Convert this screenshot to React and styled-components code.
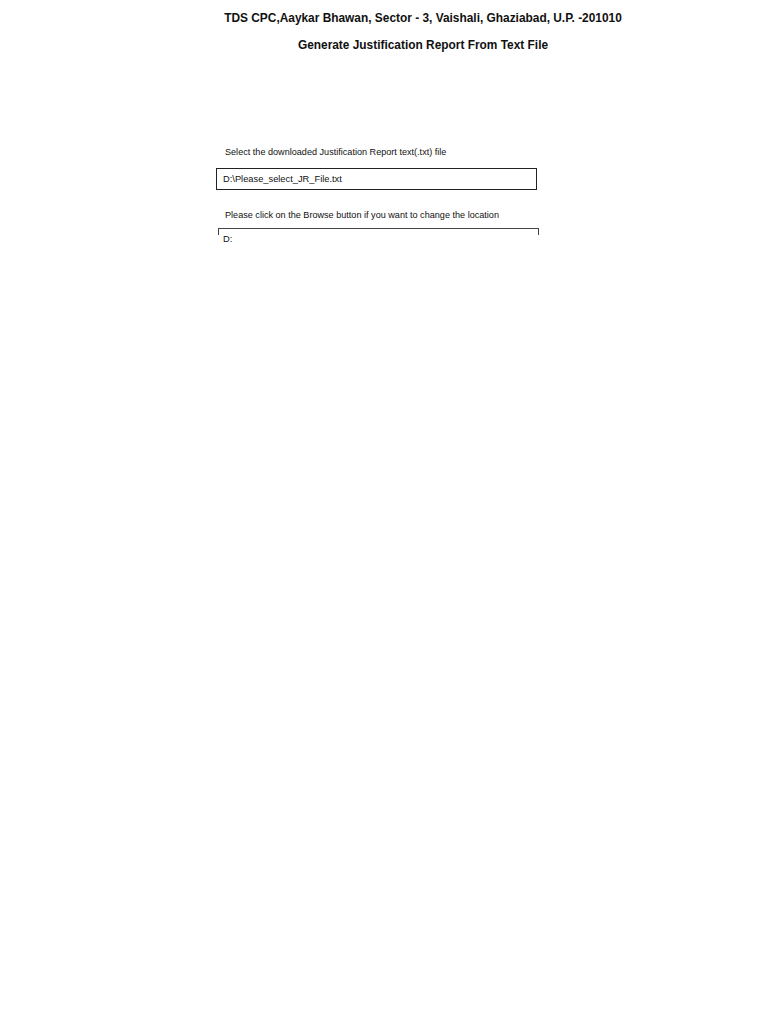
import React from 'react'
import styled, { createGlobalStyle } from 'styled-components'

const Global = createGlobalStyle`
  html, body {
    margin: 0;
    padding: 0;
    background: #ffffff;
  }
  body {
    font-family: "Liberation Sans", Arial, sans-serif;
    color: #111;
  }
`

const Page = styled.div`
  width: 768px;
  height: 1024px;
  background: #fff;
`

const Sheet = styled.div`
  margin-left: 216px;
  width: 414px;
  display: flex;
  flex-direction: column;
  padding-top: 11px;
`

const Title = styled.div`
  text-align: center;
  font-weight: bold;
  font-size: 11.9px;
  line-height: 14px;
  margin-bottom: ${p => p.$gap || 0}px;
`

const Label = styled.div`
  font-size: 9.1px;
  line-height: 10px;
  padding-left: 9px;
  margin-bottom: ${p => p.$gap || 0}px;
`

const Field = styled.div`
  width: 313px;
  height: 20px;
  border: 1px solid #222;
  box-sizing: content-box;
  display: flex;
  align-items: center;
  padding-left: 6px;
  font-size: 9.3px;
  margin-bottom: ${p => p.$gap || 0}px;
`

const CutField = styled.div`
  position: relative;
  margin-left: 2px;
  width: 316px;
  border-top: 1px solid #444;
  padding: 5px 0 0 5px;
  font-size: 9.3px;
  line-height: 11px;

  &::before, &::after {
    content: '';
    position: absolute;
    top: 0;
    width: 1px;
    height: 6px;
    background: #444;
  }
  &::before { left: 0; }
  &::after { right: 0; }
`

export default function App() {
  return (
    <Page>
      <Global />
      <Sheet>
        <Title $gap={13}>TDS CPC,Aaykar Bhawan, Sector - 3, Vaishali, Ghaziabad, U.P. -201010</Title>
        <Title $gap={95}>Generate Justification Report From Text File</Title>
        <Label $gap={11}>Select the downloaded Justification Report text(.txt) file</Label>
        <Field $gap={20}>D:\Please_select_JR_File.txt</Field>
        <Label $gap={8}>Please click on the Browse button if you want to change the location</Label>
        <CutField>D:</CutField>
      </Sheet>
    </Page>
  )
}
